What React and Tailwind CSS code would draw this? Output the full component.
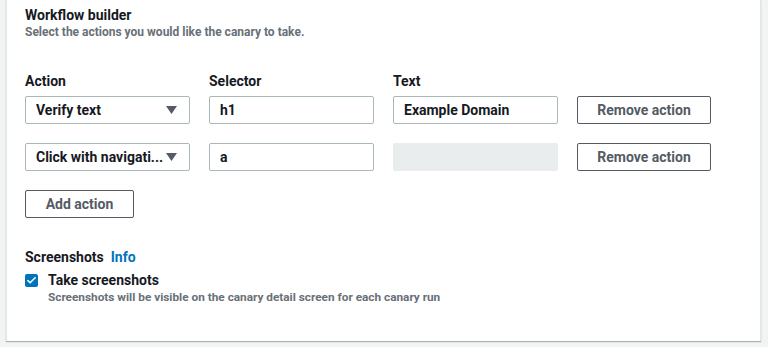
import { Check } from "lucide-react";

const font = { fontFamily: 'Roboto, "Liberation Sans", sans-serif' };

function SelectBox({ value }) {
  return (
    <div className="flex h-[28px] w-[165px] items-center justify-between rounded-[2px] border border-[#aab7b8] bg-white pl-[10px] pr-[12px]">
      <span className="truncate text-[14px] font-bold text-[#16191f]">{value}</span>
      <svg width="11" height="8" viewBox="0 0 11 8" className="shrink-0">
        <path d="M0 0h11L5.5 8z" fill="#545b64" />
      </svg>
    </div>
  );
}

function TextInput({ value, disabled }) {
  return (
    <div
      className={
        disabled
          ? "h-[28px] w-[165px] rounded-[2px] bg-[#eaeded]"
          : "flex h-[28px] w-[165px] items-center rounded-[2px] border border-[#aab7b8] bg-white px-[10px] text-[14px] font-bold text-[#16191f]"
      }
    >
      {value}
    </div>
  );
}

function Button({ children, width }) {
  return (
    <button
      className={`h-[28px] rounded-[2px] border border-[#545b64] bg-white text-[14px] font-bold text-[#545b64] ${width}`}
    >
      {children}
    </button>
  );
}

export default function App() {
  const rows = [
    { action: "Verify text", selector: "h1", text: "Example Domain" },
    { action: "Click with navigati...", selector: "a", text: null },
  ];

  return (
    <div className="h-[347px] w-[768px] bg-[#f2f3f3] pl-[6px] pr-[7px]" style={font}>
      <div className="h-[341px] border-x border-[#e4e7e7] bg-white pl-[18px] pt-[6px] shadow-[0_1px_1px_rgba(0,28,36,0.3)]">
        <h2 className="text-[14px] font-bold leading-[18px] text-[#16191f]">Workflow builder</h2>
        <p className="text-[12px] font-bold leading-[16px] text-[#687078]">
          Select the actions you would like the canary to take.
        </p>

        <div className="mt-[33px] flex gap-[19px] text-[14px] font-bold leading-[16px] text-[#16191f]">
          <span className="w-[165px]">Action</span>
          <span className="w-[165px]">Selector</span>
          <span className="w-[165px]">Text</span>
        </div>

        <div className="mt-[7px] flex flex-col gap-[19px]">
          {rows.map((r, i) => (
            <div key={i} className="flex items-center gap-[19px]">
              <SelectBox value={r.action} />
              <TextInput value={r.selector} />
              <TextInput value={r.text} disabled={r.text === null} />
              <Button width="w-[134px]">Remove action</Button>
            </div>
          ))}
        </div>

        <div className="mt-[19px]">
          <Button width="w-[109px]">Add action</Button>
        </div>

        <div className="mt-[30px] flex items-baseline gap-[7px] text-[14px] leading-[18px]">
          <span className="font-bold text-[#16191f]">Screenshots</span>
          <span className="font-bold text-[#0073bb]">Info</span>
        </div>

        <div className="mt-[6px] flex gap-[10px]">
          <div className="mt-[2px] flex h-[13px] w-[13px] items-center justify-center rounded-[2px] bg-[#0073bb]">
            <Check size={11} strokeWidth={3.5} color="white" />
          </div>
          <div>
            <div className="text-[14px] font-bold leading-[17px] text-[#16191f]">Take screenshots</div>
            <div className="text-[11.8px] font-bold leading-[16px] text-[#687078]">
              Screenshots will be visible on the canary detail screen for each canary run
            </div>
          </div>
        </div>
      </div>
    </div>
  );
}
